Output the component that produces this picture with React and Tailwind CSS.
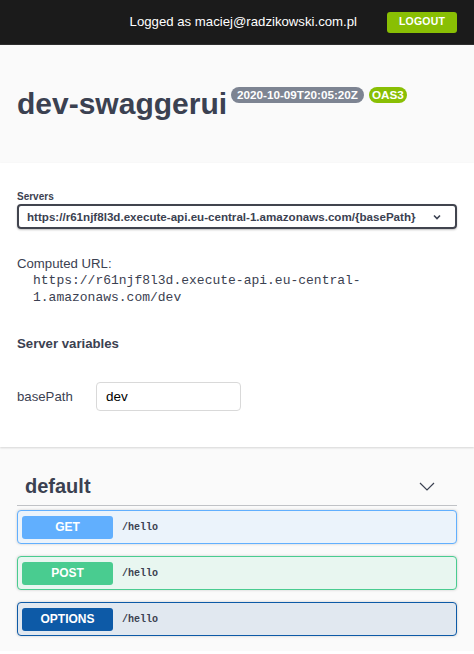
import React from "react";

const ops = [
  { method: "GET", border: "border-[#61affe]", bg: "bg-[#ebf3fb]", badge: "bg-[#61affe]" },
  { method: "POST", border: "border-[#49cc90]", bg: "bg-[#e8f6f0]", badge: "bg-[#49cc90]" },
  { method: "OPTIONS", border: "border-[#0d5aa7]", bg: "bg-[#e1e8f0]", badge: "bg-[#0d5aa7]" },
];

function Header() {
  return (
    <div className="h-[45px] bg-[#1b1b1b] border-b border-[#2e2e2e] flex items-center justify-end pr-[17px]">
      <span className="text-white text-[13.2px] mr-[30px]">Logged as maciej@radzikowski.com.pl</span>
      <button className="bg-[#89bf04] text-white font-bold text-[10.5px] w-[70px] h-[21px] rounded-[3px] tracking-[0.2px]">
        LOGOUT
      </button>
    </div>
  );
}

function Info() {
  return (
    <div className="bg-[#fafafa] pt-[42px] pb-[42px] pl-[17px] flex items-start">
      <h1 className="text-[30px] leading-[34px] font-bold text-[#3b4151]">dev-swaggerui</h1>
      <span className="ml-[4px] h-[16px] px-[6px] rounded-full bg-[#7d8492] text-white font-bold text-[11.7px] leading-[16px]">
        2020-10-09T20:05:20Z
      </span>
      <span className="ml-[5px] h-[16px] px-[3px] rounded-full bg-[#89bf04] text-white font-bold text-[11.7px] leading-[16px]">
        OAS3
      </span>
    </div>
  );
}

function Servers() {
  return (
    <div className="bg-white shadow-[0_1px_2px_0_rgba(0,0,0,0.15)] relative pt-[28px] pb-[36px] px-[17px] text-[#3b4151]">
      <div className="text-[10px] leading-[12px] font-bold">Servers</div>
      <div className="mt-[1px] h-[25px] border-2 border-[#41444e] rounded-[4px] shadow-[0_1px_2px_0_rgba(0,0,0,0.25)] flex items-center justify-between pl-[8px] pr-[14px]">
        <span className="font-bold text-[11.6px] text-[#3b4151] whitespace-nowrap">
          https://r61njf8l3d.execute-api.eu-central-1.amazonaws.com/{"{basePath}"}
        </span>
        <svg width="8" height="6" viewBox="0 0 8 6" className="shrink-0">
          <polyline points="1,1.5 4,4.5 7,1.5" fill="none" stroke="#3b4151" strokeWidth="1.6" />
        </svg>
      </div>
      <div className="mt-[27px] text-[13.2px] leading-[16px]">Computed URL:</div>
      <div className="pl-[16px] pr-[40px] font-['Liberation_Mono',monospace] text-[13px] leading-[17px] text-[#3b4151]">
        https://r61njf8l3d.execute-api.eu-central-1.amazonaws.com/dev
      </div>
      <div className="mt-[30px] text-[13.2px] leading-[16px] font-bold">Server variables</div>
      <div className="mt-[30px] flex items-center">
        <span className="w-[79px] text-[13.2px]">basePath</span>
        <input
          defaultValue="dev"
          className="w-[145px] h-[29px] border border-[#d9d9d9] rounded-[4px] px-[9px] text-[13.5px] text-black bg-white outline-none"
        />
      </div>
    </div>
  );
}

function Operations() {
  return (
    <div className="bg-[#fafafa] pt-[27px] pb-[15px] px-[17px]">
      <div className="flex items-center justify-between pl-[8px] pr-[22px] pb-[7px] border-b border-[rgba(59,65,81,0.3)]">
        <h3 className="text-[20px] leading-[24px] font-bold text-[#3b4151]">default</h3>
        <svg width="16" height="9" viewBox="0 0 16 9">
          <polyline points="1,1 8,8 15,1" fill="none" stroke="#3b4151" strokeWidth="1.2" />
        </svg>
      </div>
      <div className="mt-[4px] flex flex-col gap-[12px]">
        {ops.map(({ method, border, bg, badge }) => (
          <div
            key={method}
            className={`h-[34px] border ${border} ${bg} rounded-[4px] shadow-[0_0_3px_rgba(0,0,0,0.19)] flex items-center px-[4px]`}
          >
            <span
              className={`${badge} w-[91px] h-[23px] rounded-[3px] flex items-center justify-center text-white font-bold text-[12px]`}
            >
              {method}
            </span>
            <span className="ml-[9px] font-['Liberation_Mono',monospace] font-bold text-[10px] text-[#3b4151]">
              /hello
            </span>
          </div>
        ))}
      </div>
    </div>
  );
}

export default function App() {
  return (
    <div className="min-h-[654px] bg-white font-['Liberation_Sans',Arial,sans-serif]">
      <Header />
      <Info />
      <Servers />
      <Operations />
    </div>
  );
}
